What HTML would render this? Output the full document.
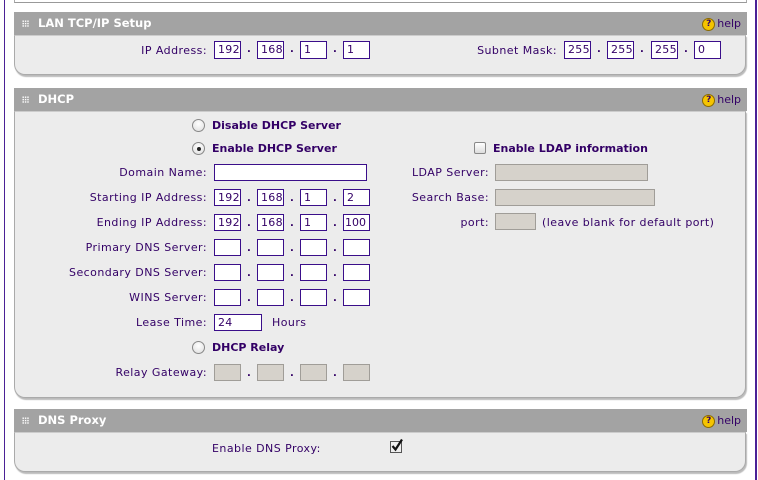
<!DOCTYPE html>
<html><head><meta charset="utf-8"><style>
*{margin:0;padding:0;box-sizing:border-box}
body{width:758px;height:480px;background:#fff;position:relative;overflow:hidden;font-family:"DejaVu Sans","Liberation Sans",sans-serif;font-size:11px;letter-spacing:0.45px;color:#330066}
.abs{position:absolute}
.vl{position:absolute;top:0;height:480px;width:1px;background:#4b2196}
.hdr{position:absolute;left:14px;width:733px;height:23px;background:#a3a3a3;color:#fff;font-weight:bold;font-size:11.5px;letter-spacing:0;line-height:23px;padding-left:24px}
.grip{position:absolute;left:8px;top:8px;width:7px;height:7px;background-image:radial-gradient(circle,#fff 0.8px,transparent 0.9px);background-size:2.4px 2.4px}
.help{position:absolute;right:6px;top:5px;height:14px;display:flex;align-items:center;color:#330066;font-weight:normal;font-size:11px;line-height:14px}
.help i{display:inline-block;width:13px;height:13px;border-radius:50%;background:#f5c400;border:1px solid #8a6a00;color:#330066;font-style:normal;font-weight:bold;font-size:9px;line-height:11px;text-align:center;margin-right:2px}
.body{position:absolute;left:14px;width:732px;background:#ececec;border:1px solid #aaa;border-top:1px solid #ccc;border-radius:0 0 11px 11px;box-shadow:1px 2px 1px #bbb}
.in{position:absolute;height:18px;border:1px solid #3a0e8a;background:#fff;font-size:11px;letter-spacing:0.3px;line-height:16px;padding-left:3px;color:#330066}
.g{background:#d6d2cb;border:1px solid #a09d98}
.lbl{position:absolute;text-align:right;white-space:nowrap;line-height:14px;margin-top:1px}
.dot{position:absolute;font-weight:bold;font-size:10px;line-height:14px}
.b{position:absolute;font-weight:bold;font-size:11px;letter-spacing:0;white-space:nowrap;line-height:14px;margin-top:1px}
.rad{position:absolute;width:13px;height:13px;border-radius:50%;border:1px solid #888;background:radial-gradient(circle at 50% 35%,#fff,#ddd)}
</style></head><body>
<div class="vl" style="left:4px"></div>
<div class="vl" style="left:755px;width:2px"></div>
<div class="abs" style="left:14px;top:0;width:733px;height:3px;border-bottom:1px solid #999;border-left:1px solid #aaa;border-right:1px solid #aaa"></div>

<div class="hdr" style="top:12px"><span class="grip"></span>LAN TCP/IP Setup<span class="help"><i>?</i>help</span></div>
<div class="body" style="top:35px;height:40px"></div>
<div class="lbl" style="left:80px;width:127px;top:43px">IP Address:</div>
<div class="in" style="left:214px;top:41px;width:27px">192</div><div class="dot" style="left:247px;top:43px">.</div>
<div class="in" style="left:257px;top:41px;width:27px">168</div><div class="dot" style="left:290px;top:43px">.</div>
<div class="in" style="left:300px;top:41px;width:27px">1</div><div class="dot" style="left:333px;top:43px">.</div>
<div class="in" style="left:343px;top:41px;width:27px">1</div>
<div class="lbl" style="left:420px;width:137px;top:43px">Subnet Mask:</div>
<div class="in" style="left:564px;top:41px;width:27px">255</div><div class="dot" style="left:597px;top:43px">.</div>
<div class="in" style="left:607px;top:41px;width:27px">255</div><div class="dot" style="left:640px;top:43px">.</div>
<div class="in" style="left:651px;top:41px;width:27px">255</div><div class="dot" style="left:684px;top:43px">.</div>
<div class="in" style="left:694px;top:41px;width:27px">0</div>

<div class="hdr" style="top:88px"><span class="grip"></span>DHCP<span class="help"><i>?</i>help</span></div>
<div class="body" style="top:111px;height:287px"></div>
<div class="rad" style="left:192px;top:119px"></div><div class="b" style="left:212px;top:118px">Disable DHCP Server</div>
<div class="rad" style="left:192px;top:142px"></div><div class="abs" style="left:197px;top:147px;width:4px;height:4px;border-radius:50%;background:#222"></div><div class="b" style="left:212px;top:141px">Enable DHCP Server</div>
<div class="abs" style="left:474px;top:142px;width:12px;height:12px;border:1px solid #888;border-radius:2px;background:linear-gradient(#fff,#ddd)"></div><div class="b" style="left:493px;top:141px">Enable LDAP information</div>

<div class="lbl" style="left:20px;width:187px;top:165px">Domain Name:</div>
<div class="in" style="left:214px;top:164px;width:153px;height:17px"></div>
<div class="lbl" style="left:320px;width:169px;top:165px">LDAP Server:</div>
<div class="in g" style="left:495px;top:164px;width:153px;height:17px"></div>
<div class="lbl" style="left:320px;width:169px;top:190px">Search Base:</div>
<div class="in g" style="left:495px;top:189px;width:160px;height:17px"></div>
<div class="lbl" style="left:320px;width:169px;top:215px">port:</div>
<div class="in g" style="left:495px;top:213px;width:41px;height:17px"></div>
<div class="lbl" style="left:542px;top:215px">(leave blank for default port)</div>

<div class="lbl" style="left:20px;width:187px;top:190px">Starting IP Address:</div>
<div class="lbl" style="left:20px;width:187px;top:215px">Ending IP Address:</div>
<div class="lbl" style="left:20px;width:187px;top:240px">Primary DNS Server:</div>
<div class="lbl" style="left:20px;width:187px;top:265px">Secondary DNS Server:</div>
<div class="lbl" style="left:20px;width:187px;top:290px">WINS Server:</div>
<div class="lbl" style="left:20px;width:187px;top:315px">Lease Time:</div>

<div class="in" style="left:214px;top:189px;width:27px;height:17px">192</div><div class="dot" style="left:247px;top:192px">.</div>
<div class="in" style="left:257px;top:189px;width:27px;height:17px">168</div><div class="dot" style="left:290px;top:192px">.</div>
<div class="in" style="left:300px;top:189px;width:27px;height:17px">1</div><div class="dot" style="left:333px;top:192px">.</div>
<div class="in" style="left:343px;top:189px;width:27px;height:17px">2</div>

<div class="in" style="left:214px;top:214px;width:27px;height:17px">192</div><div class="dot" style="left:247px;top:217px">.</div>
<div class="in" style="left:257px;top:214px;width:27px;height:17px">168</div><div class="dot" style="left:290px;top:217px">.</div>
<div class="in" style="left:300px;top:214px;width:27px;height:17px">1</div><div class="dot" style="left:333px;top:217px">.</div>
<div class="in" style="left:343px;top:214px;width:27px;height:17px;padding-left:1px;letter-spacing:0">100</div>

<div class="in" style="left:214px;top:239px;width:27px;height:17px"></div><div class="dot" style="left:247px;top:242px">.</div>
<div class="in" style="left:257px;top:239px;width:27px;height:17px"></div><div class="dot" style="left:290px;top:242px">.</div>
<div class="in" style="left:300px;top:239px;width:27px;height:17px"></div><div class="dot" style="left:333px;top:242px">.</div>
<div class="in" style="left:343px;top:239px;width:27px;height:17px"></div>

<div class="in" style="left:214px;top:264px;width:27px;height:17px"></div><div class="dot" style="left:247px;top:267px">.</div>
<div class="in" style="left:257px;top:264px;width:27px;height:17px"></div><div class="dot" style="left:290px;top:267px">.</div>
<div class="in" style="left:300px;top:264px;width:27px;height:17px"></div><div class="dot" style="left:333px;top:267px">.</div>
<div class="in" style="left:343px;top:264px;width:27px;height:17px"></div>

<div class="in" style="left:214px;top:289px;width:27px;height:17px"></div><div class="dot" style="left:247px;top:292px">.</div>
<div class="in" style="left:257px;top:289px;width:27px;height:17px"></div><div class="dot" style="left:290px;top:292px">.</div>
<div class="in" style="left:300px;top:289px;width:27px;height:17px"></div><div class="dot" style="left:333px;top:292px">.</div>
<div class="in" style="left:343px;top:289px;width:27px;height:17px"></div>

<div class="in" style="left:214px;top:314px;width:48px;height:17px">24</div>
<div class="lbl" style="left:272px;top:315px">Hours</div>

<div class="rad" style="left:192px;top:341px"></div><div class="b" style="left:212px;top:340px">DHCP Relay</div>
<div class="lbl" style="left:20px;width:187px;top:365px">Relay Gateway:</div>
<div class="in g" style="left:214px;top:364px;width:27px;height:17px"></div><div class="dot" style="left:247px;top:367px">.</div>
<div class="in g" style="left:257px;top:364px;width:27px;height:17px"></div><div class="dot" style="left:290px;top:367px">.</div>
<div class="in g" style="left:300px;top:364px;width:27px;height:17px"></div><div class="dot" style="left:333px;top:367px">.</div>
<div class="in g" style="left:343px;top:364px;width:27px;height:17px"></div>

<div class="hdr" style="top:409px"><span class="grip"></span>DNS Proxy<span class="help"><i>?</i>help</span></div>
<div class="body" style="top:432px;height:40px"></div>
<div class="lbl" style="left:212px;top:441px">Enable DNS Proxy:</div>
<div class="abs" style="left:390px;top:441px;width:12px;height:12px;border:1px solid #555;background:#eee"></div>
<svg class="abs" style="left:389px;top:437px" width="16" height="16" viewBox="0 0 16 16"><path d="M3.5 9 L6.5 12.5 L13 2.5" fill="none" stroke="#111" stroke-width="2.2"/></svg>
</body></html>
